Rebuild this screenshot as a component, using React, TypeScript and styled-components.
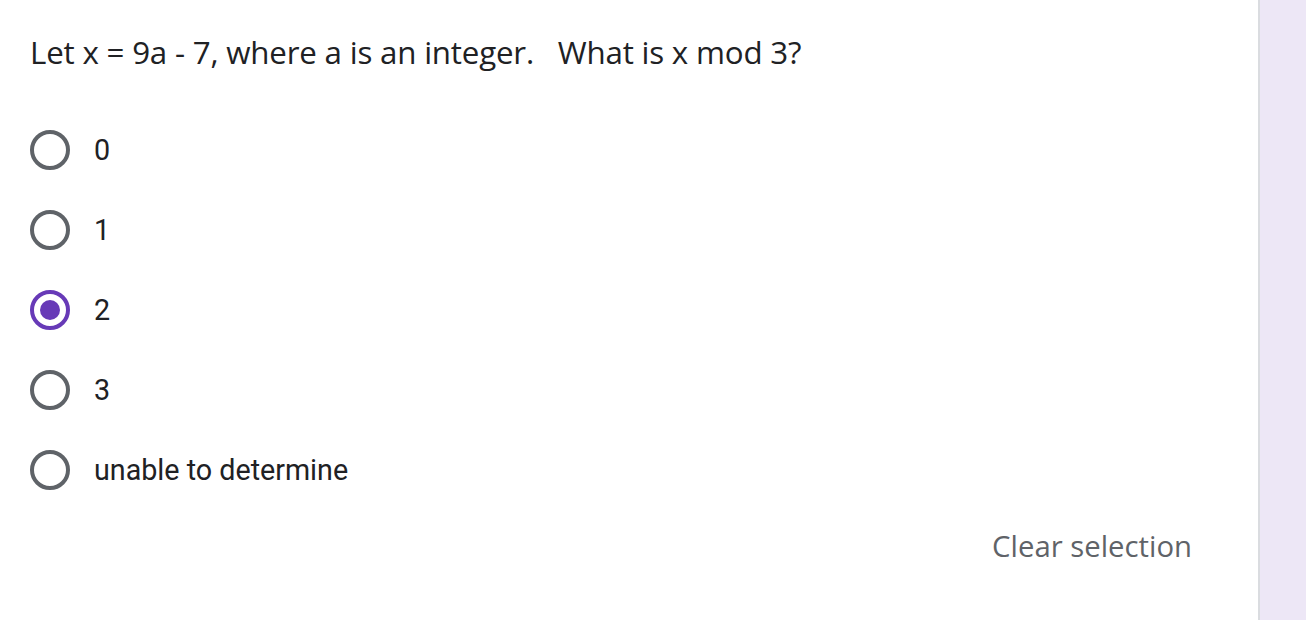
import React, { useState } from 'react';
import styled, { createGlobalStyle } from 'styled-components';

const GlobalStyle = createGlobalStyle`
  html, body {
    margin: 0;
    padding: 0;
    background: #ede7f6;
  }
  body {
    font-family: Roboto, "Liberation Sans", Arial, sans-serif;
  }
`;

const Page = styled.div`
  display: flex;
  height: 620px;
  overflow: hidden;
`;

const Card = styled.section`
  width: 1260px;
  box-sizing: border-box;
  background: #ffffff;
  border-right: 2px solid #dadce0;
  padding: 32px 66px 0 30px;
  display: flex;
  flex-direction: column;
`;

const Question = styled.h2`
  margin: 0;
  font-family: "Open Sans", Roboto, sans-serif;
  font-weight: 400;
  font-size: 31.3px;
  line-height: 40px;
  color: #202124;
  white-space: pre-wrap;
  letter-spacing: -0.2px;
`;

const Options = styled.div`
  display: flex;
  flex-direction: column;
  margin-top: 38px;
`;

const Option = styled.label`
  display: flex;
  align-items: center;
  gap: 24px;
  height: 80px;
  cursor: pointer;
`;

const Radio = styled.span<{ $checked: boolean }>`
  width: 40px;
  height: 40px;
  box-sizing: border-box;
  border-radius: 50%;
  border: 4px solid ${(p) => (p.$checked ? '#673ab7' : '#5f6368')};
  display: flex;
  align-items: center;
  justify-content: center;
  flex-shrink: 0;

  &::after {
    content: '';
    width: 20px;
    height: 20px;
    border-radius: 50%;
    background: #673ab7;
    display: ${(p) => (p.$checked ? 'block' : 'none')};
  }
`;

const Label = styled.span`
  font-family: Roboto, sans-serif;
  font-size: 28.7px;
  color: #202124;
`;

const Footer = styled.div`
  display: flex;
  justify-content: flex-end;
  margin-top: 16px;
`;

const ClearButton = styled.button`
  border: none;
  background: none;
  padding: 0;
  font-family: "Open Sans", Roboto, sans-serif;
  font-weight: 500;
  font-size: 29.3px;
  line-height: 40px;
  color: #5f6368;
  cursor: pointer;
`;

const choices = ['0', '1', '2', '3', 'unable to determine'];

const App: React.FC = () => {
  const [selected, setSelected] = useState<string | null>('2');

  return (
    <Page>
      <GlobalStyle />
      <Card>
        <Question>{'Let x = 9a - 7, where a is an integer.   What is x mod 3?'}</Question>
        <Options>
          {choices.map((c) => (
            <Option key={c} onClick={() => setSelected(c)}>
              <Radio $checked={selected === c} />
              <Label>{c}</Label>
            </Option>
          ))}
        </Options>
        <Footer>
          <ClearButton onClick={() => setSelected(null)}>Clear selection</ClearButton>
        </Footer>
      </Card>
    </Page>
  );
};

export default App;
